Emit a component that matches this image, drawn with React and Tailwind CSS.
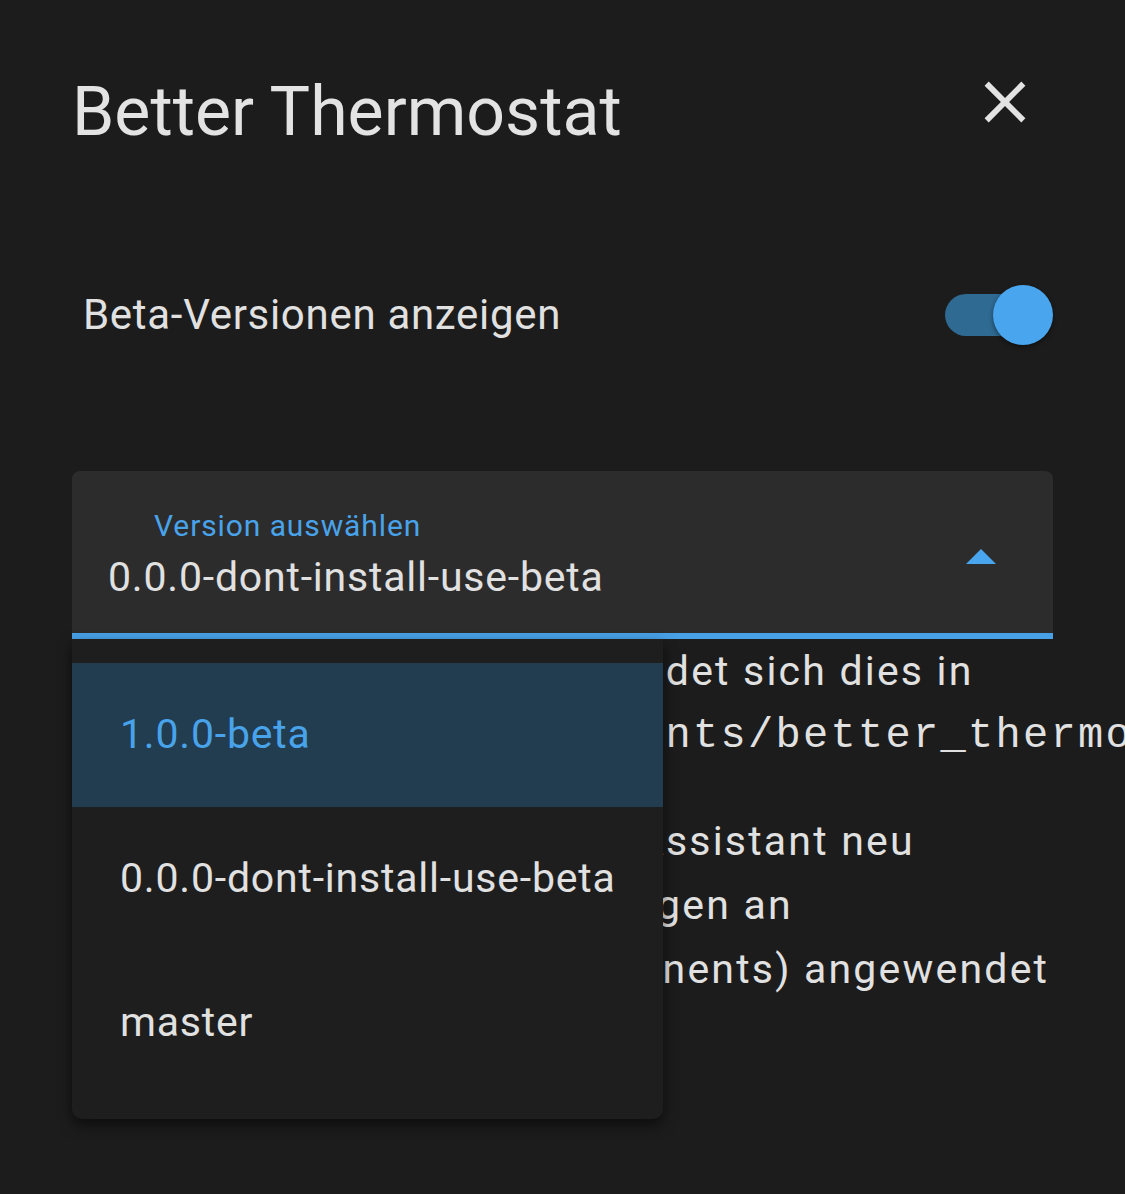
import React from "react";

const versions = ["1.0.0-beta", "0.0.0-dont-install-use-beta", "master"];

function CloseIcon() {
    return (
        <svg viewBox="0 0 24 24" className="w-[70px] h-[70px] fill-[#e3e3e3]">
            <path d="M19 6.41L17.59 5 12 10.59 6.41 5 5 6.41 10.59 12 5 17.59 6.41 19 12 13.41 17.59 19 19 17.59 13.41 12z" />
        </svg>
    );
}

function Toggle() {
    return (
        <div className="relative w-[108px] h-[60px] shrink-0">
            <div className="absolute left-0 top-[9px] w-[96px] h-[42px] rounded-full bg-[#2f6a93]" />
            <div className="absolute right-0 top-0 w-[60px] h-[60px] rounded-full bg-[#48a5ee] shadow-[0_2px_5px_rgba(0,0,0,0.45)]" />
        </div>
    );
}

// one line of the dialog text; the start is hidden under the open menu
function Line({ hidden, shown, width, mono }) {
    return (
        <div className={"flex whitespace-nowrap h-[64px] " + (mono ? "font-['Liberation_Mono',monospace] text-[42px] leading-[66px] tracking-[2.3px]" : "text-[41px] leading-[64px] tracking-[2.2px]")}>
            <span className="shrink-0 overflow-hidden text-right" style={{ width }}>{hidden}</span>
            <span>{shown}</span>
        </div>
    );
}

export default function App() {
    return (
        <div className="w-[1125px] h-[1194px] overflow-hidden bg-[#1c1c1c] text-[#e1e1e1] font-['Roboto',sans-serif]">
            {/* Header */}
            <div className="flex items-start justify-between pt-[67px] pl-[72px] pr-[85px]">
                <h1 className="mt-[11px] text-[68px] leading-[68px] text-[#e3e3e3]">Better Thermostat</h1>
                <CloseIcon />
            </div>

            {/* Beta toggle */}
            <div className="flex items-center justify-between mt-[139px] pl-[83px] pr-[72px] h-[60px]">
                <span className="text-[42px] leading-[42px] tracking-[0.7px]">Beta-Versionen anzeigen</span>
                <Toggle />
            </div>

            {/* Version select */}
            <div className="relative mx-[72px] mt-[126px]">
                <div className="flex justify-between h-[168px] rounded-t-[8px] bg-[#2c2c2c] border-b-[6px] border-[#48a0e6] pt-[40px] pl-[36px] pr-[57px]">
                    <div className="flex flex-col gap-[16px]">
                        <span className="ml-[46px] text-[30px] leading-[30px] tracking-[0.9px] text-[#48a3ea]">Version auswählen</span>
                        <span className="text-[41px] leading-[41px] tracking-[0.8px]">0.0.0-dont-install-use-beta</span>
                    </div>
                    <svg viewBox="0 0 30 15" className="mt-[38px] w-[30px] h-[15px] fill-[#48a5ee]">
                        <path d="M0 15L15 0L30 15Z" />
                    </svg>
                </div>

                {/* open menu */}
                <div className="absolute left-0 top-full z-10 w-[591px] py-[24px] rounded-b-[10px] bg-[#1e1e1e] shadow-[0_6px_14px_rgba(0,0,0,0.55)]">
                    {versions.map((v, i) => (
                        <div
                            key={v}
                            className={"flex items-center h-[144px] pl-[48px] text-[41px] tracking-[0.8px] " + (i === 0 ? "bg-[#223c50] text-[#48a3ea]" : "text-[#e1e1e1]")}
                        >
                            {v}
                        </div>
                    ))}
                </div>
            </div>

            {/* Text behind the menu */}
            <div className="pl-[72px]">
                <Line hidden="Nach dem Herunterladen befi" shown="ndet sich dies in" width={569} />
                <Line hidden="'/config/custom_compon" shown="ents/better_thermostat'" width={566} mono />
                <div className="h-[42px]" />
                <Line hidden="Sie müssen Home " shown="Assistant neu" width={565} />
                <Line hidden="starten, damit die Änderun" shown="gen an" width={585} />
                <Line hidden="Integrationen (custom_comp" shown="onents) angewendet" width={565} />
                <Line hidden="werden." shown="" width={300} />
            </div>
        </div>
    );
}
